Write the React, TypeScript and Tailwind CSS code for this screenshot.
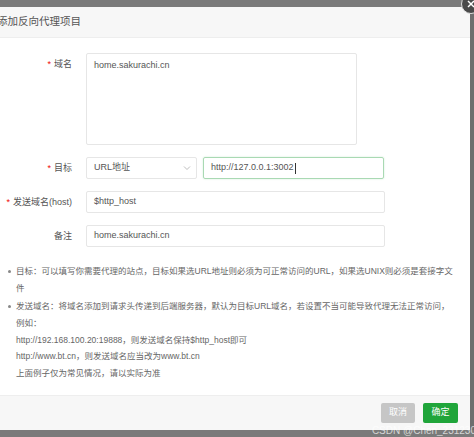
import React from "react";

const font = { fontFamily: '"Liberation Sans", "Noto Sans CJK SC", sans-serif' };

const Label = ({ text, required }: { text: string; required?: boolean }) => (
  <div className="w-[72px] h-[22px] leading-[22px] text-right text-[9px] text-[#555] whitespace-nowrap shrink-0">
    {required && <span className="text-[#ef0808] mr-[3px]">*</span>}
    {text}
  </div>
);

const Row = ({ children }: { children: React.ReactNode }) => (
  <div className="flex items-start gap-[14px]">{children}</div>
);

const notes = [
  [
    "目标：可以填写你需要代理的站点，目标如果选URL地址则必须为可正常访问的URL，如果选UNIX则必须是套接字文",
    "件",
  ],
  [
    "发送域名：将域名添加到请求头传递到后端服务器，默认为目标URL域名，若设置不当可能导致代理无法正常访问，",
    "例如：",
    "http://192.168.100.20:19888，则发送域名保持$http_host即可",
    "http://www.bt.cn，则发送域名应当改为www.bt.cn",
    "上面例子仅为常见情况，请以实际为准",
  ],
];

export default function App() {
  return (
    <div className="relative w-[474px] h-[437px] bg-[#7a7a7a] overflow-hidden flex flex-col" style={font}>
      <div className="h-[7px] shrink-0" />
      <div className="flex flex-1 min-h-0">
        <div className="w-[470px] bg-white flex flex-col">
          {/* Header */}
          <div className="h-[31px] shrink-0 bg-[#f7f7f7] border-b border-[#eeeeee] flex items-center">
            <span className="-ml-[3px] text-[10.5px] text-[#555]">添加反向代理项目</span>
          </div>

          {/* Body */}
          <div className="flex-1 pt-[15px] flex flex-col">
            <div className="flex flex-col gap-[12px]">
              <Row>
                <Label text="域名" required />
                <div className="w-[271px] h-[92px] border border-[#e6e6e6] rounded-[2px] px-[7px] py-[5px] text-[9px] text-[#555]">
                  home.sakurachi.cn
                </div>
              </Row>
              <Row>
                <Label text="目标" required />
                <div className="flex gap-[6px]">
                  <div className="w-[111px] h-[22px] border border-[#e6e6e6] rounded-[2px] pl-[7px] pr-[5px] flex items-center justify-between text-[9px] text-[#555]">
                    <span>URL地址</span>
                    <svg width="8" height="6" viewBox="0 0 8 6" fill="none" stroke="#b5b5b5" strokeWidth="0.9">
                      <polyline points="1,1.5 4,4.5 7,1.5" />
                    </svg>
                  </div>
                  <div className="w-[181px] h-[22px] border border-[#a9d9b3] rounded-[2px] px-[7px] flex items-center text-[9px] text-[#555] shadow-[0_0_2px_#cdebd3]">
                    http://127.0.0.1:3002
                    <span className="w-px h-[11px] bg-[#333] ml-px" />
                  </div>
                </div>
              </Row>
              <Row>
                <Label text="发送域名(host)" required />
                <div className="w-[299px] h-[22px] border border-[#e6e6e6] rounded-[2px] px-[7px] flex items-center text-[9px] text-[#555]">
                  $http_host
                </div>
              </Row>
              <Row>
                <Label text="备注" />
                <div className="w-[299px] h-[22px] border border-[#e6e6e6] rounded-[2px] px-[7px] flex items-center text-[9px] text-[#555]">
                  home.sakurachi.cn
                </div>
              </Row>
            </div>

            {/* Notes */}
            <div className="mt-[16px] flex flex-col gap-[2px] text-[8.5px] text-[#666]">
              {notes.map((lines, i) => (
                <div key={i} className="flex">
                  <div className="w-[16px] shrink-0 h-[16.7px] flex items-center pl-[8px]">
                    <span className="w-[3px] h-[3px] rounded-full bg-[#888]" />
                  </div>
                  <div className="flex flex-col">
                    {lines.map((l, j) => (
                      <div key={j} className="h-[16.7px] leading-[16.7px] whitespace-nowrap">
                        {l}
                      </div>
                    ))}
                  </div>
                </div>
              ))}
            </div>
          </div>

          {/* Footer */}
          <div className="h-[35px] shrink-0 bg-[#f7f7f7] border-t border-[#eeeeee] flex items-center justify-end gap-[8px] pr-[12px]">
            <button className="w-[34px] h-[20px] rounded-[2px] bg-[#c6c6c6] text-white text-[9px]">取消</button>
            <button className="w-[35px] h-[20px] rounded-[2px] bg-[#20a53a] text-white text-[9px]">确定</button>
          </div>
        </div>
        <div className="flex-1 bg-[#6e6e6e]" />
      </div>
      <div className="h-[7px] shrink-0" />

      {/* close button */}
      <div className="absolute left-[461px] top-[-6px] w-[20px] h-[20px] rounded-full bg-[#4a4a4a] border border-[#dddddd] flex items-center justify-center">
        <svg width="8" height="8" viewBox="0 0 8 8" stroke="white" strokeWidth="1.4">
          <line x1="1" y1="1" x2="7" y2="7" />
          <line x1="7" y1="1" x2="1" y2="7" />
        </svg>
      </div>

      {/* watermark */}
      <div className="absolute right-[-2px] bottom-[-1px] text-[10px] text-white/70 whitespace-nowrap">
        CSDN @Chen_231230
      </div>
    </div>
  );
}
